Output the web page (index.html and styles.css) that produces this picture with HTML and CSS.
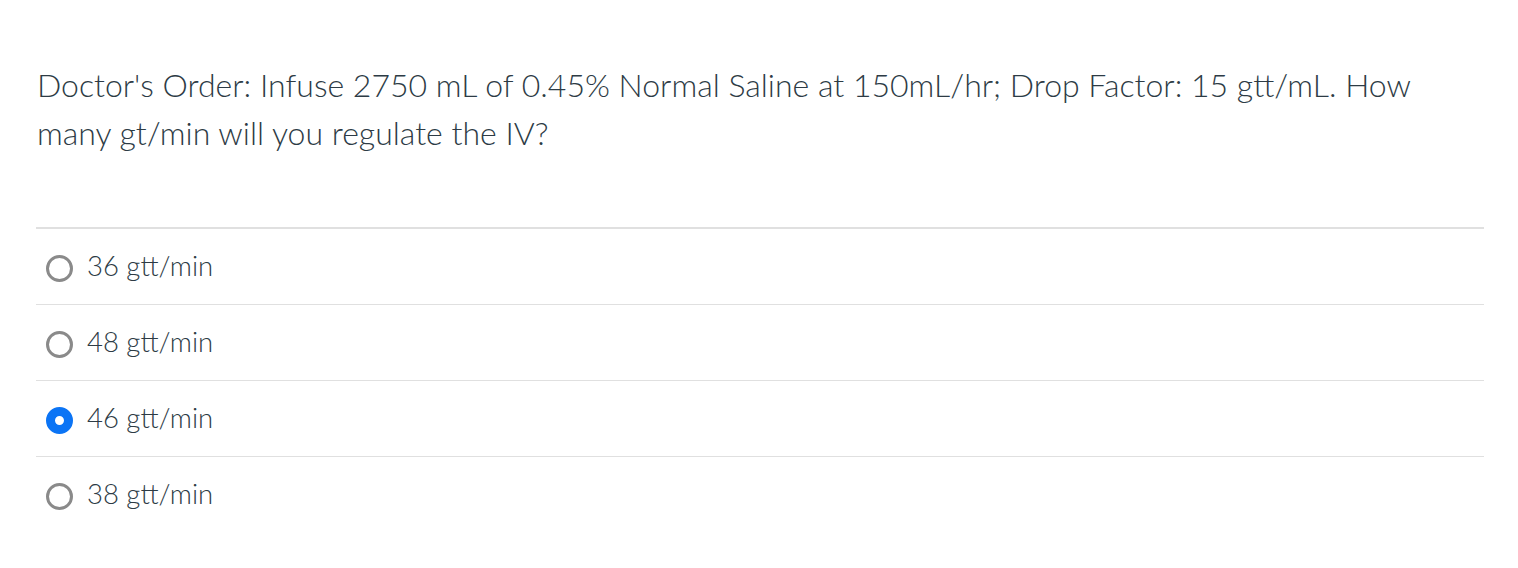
FILE: index.html
```html
<!DOCTYPE html>
<html>
<head>
<meta charset="utf-8">
<link rel="stylesheet" href="styles.css">
</head>
<body>
<div class="question">
  <p class="prompt">Doctor's Order: Infuse 2750 mL of 0.45% Normal Saline at 150mL/hr; Drop Factor: 15 gtt/mL. How many gt/min will you regulate the IV?</p>
  <div class="answers">
    <label class="answer"><span class="radio"></span><span class="text">36 gtt/min</span></label>
    <label class="answer"><span class="radio"></span><span class="text">48 gtt/min</span></label>
    <label class="answer"><span class="radio checked"></span><span class="text">46 gtt/min</span></label>
    <label class="answer last"><span class="radio"></span><span class="text">38 gtt/min</span></label>
  </div>
</div>
</body>
</html>
```
FILE: styles.css
```css
html, body {
  margin: 0;
  padding: 0;
  background: #fff;
}
body {
  font-family: Lato, "Noto Sans", sans-serif;
  color: #2d3b45;
}
.question {
  padding: 61px 34px 0 36px;
}
.prompt {
  margin: 0 0 70px 0;
  font-size: 32px;
  line-height: 48px;
  font-weight: 300;
  padding-left: 1px;
  padding-right: 60px;
}
.answers {
  border-top: 2px solid #e0e0e0;
}
.answer {
  display: flex;
  align-items: center;
  height: 75px;
  border-bottom: 1.5px solid #e0e0e0;
  padding-left: 10px;
  gap: 14px;
}
.answer.last {
  border-bottom: none;
}
.radio {
  box-sizing: border-box;
  width: 27px;
  height: 27px;
  border-radius: 50%;
  border: 3px solid #8a8a8a;
  margin-top: 4px;
  flex: none;
}
.radio.checked {
  border: 9px solid #0b74f5;
  background: #fff;
}
.text {
  font-size: 27.5px;
  line-height: 30px;
  font-weight: 300;
  margin-top: -2px;
}
```
